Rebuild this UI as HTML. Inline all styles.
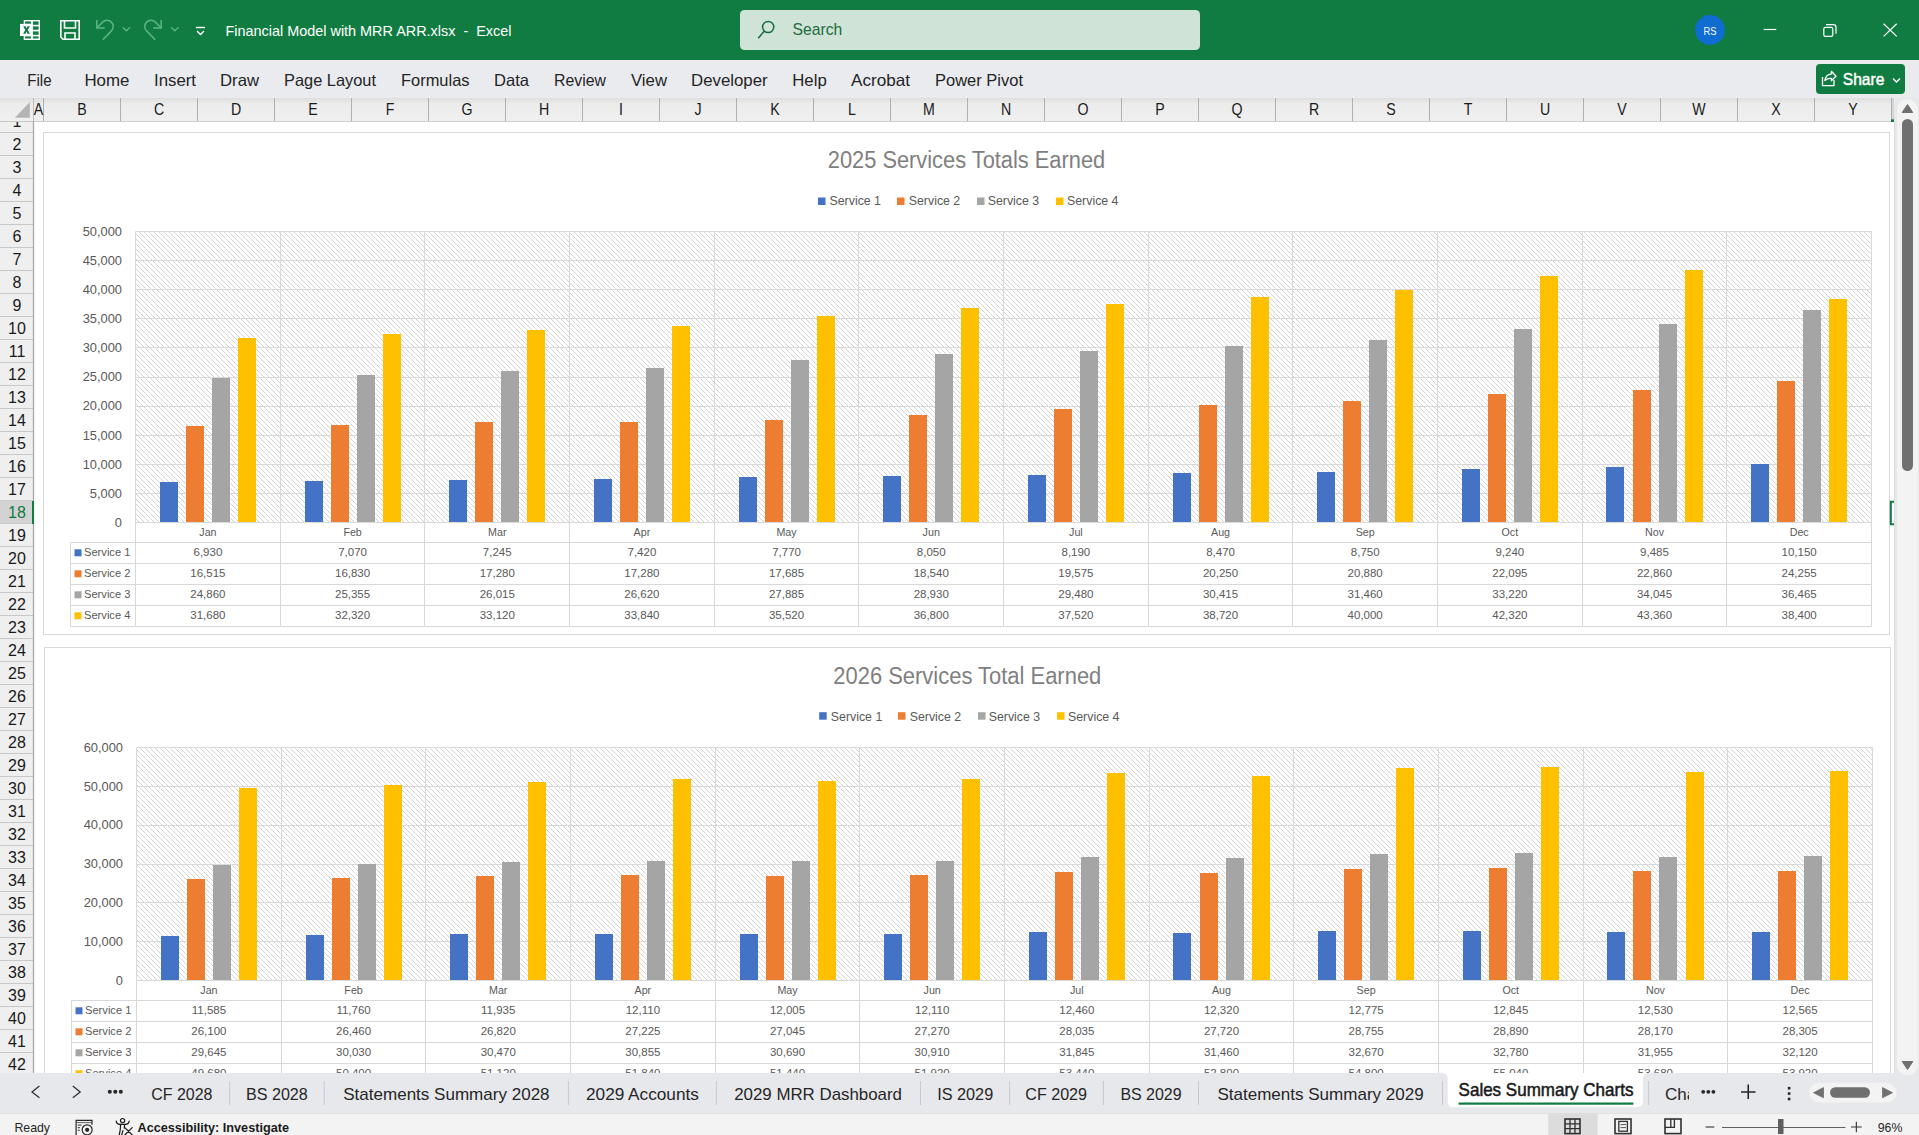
<!DOCTYPE html><html><head><meta charset="utf-8"><title>Excel</title><style>html,body{margin:0;padding:0;background:#fff;overflow:hidden}svg{display:block}text{font-family:"Liberation Sans",sans-serif}</style></head><body><svg width="1919" height="1135" viewBox="0 0 1919 1135" font-family="Liberation Sans, sans-serif">
<defs><pattern id="hatch" patternUnits="userSpaceOnUse" width="5" height="5"><rect x="2" y="0" width="1" height="1" fill="#d2d2d2"/><rect x="3" y="1" width="1" height="1" fill="#d2d2d2"/><rect x="4" y="2" width="1" height="1" fill="#d2d2d2"/><rect x="0" y="3" width="1" height="1" fill="#e0e0e0"/><rect x="1" y="4" width="1" height="1" fill="#d2d2d2"/></pattern></defs>
<rect x="0.00" y="0.00" width="1919.00" height="1135.00" fill="#ffffff"/>
<rect x="0.00" y="0.00" width="1919.00" height="60.00" fill="#117c42"/>
<g><rect x="23.7" y="20" width="16.3" height="20" fill="#ffffff"/><rect x="20" y="23.9" width="12" height="12.1" fill="#ffffff"/><g fill="#117c42"><rect x="25.1" y="21.4" width="5.8" height="2.3"/><rect x="25.1" y="36.4" width="5.8" height="2.1"/><rect x="32.9" y="21.4" width="5.7" height="3.4"/><rect x="32.9" y="26.4" width="5.7" height="3.3"/><rect x="32.9" y="31.4" width="5.7" height="3.4"/><rect x="32.9" y="36.4" width="5.7" height="2.1"/></g><path d="M23.2 26.2 H25.6 L26.5 28.4 L27.4 26.2 H29.8 L27.8 30 L29.9 33.8 H27.4 L26.5 31.6 L25.6 33.8 H23.1 L25.2 30 Z" fill="#117c42"/></g>
<g fill="none" stroke="#ffffff" stroke-width="1.6"><path d="M60.8 20.8 H79.2 V39.2 H63 L60.8 37 Z"/><path d="M64.5 20.8 V28 H75.5 V20.8"/><path d="M65 39.2 V33 H75 V39.2"/></g>
<g fill="none" stroke="#5db585" stroke-width="1.5"><path d="M96.8 20 V28 H104.8"/><path d="M96.8 28 L102.6 22.1 A6.2 6.2 0 1 1 111.4 30.9 L102.8 39.7"/><path d="M122.7 27.2 L126.4 30.8 L130.1 27.2" stroke-width="1.2"/><path d="M161.2 20 V28 H153.2"/><path d="M161.2 28 L155.4 22.1 A6.2 6.2 0 1 0 146.6 30.9 L155.2 39.7"/><path d="M171.2 27.2 L174.9 30.8 L178.6 27.2" stroke-width="1.2"/></g>
<g fill="none" stroke="#ffffff" stroke-width="1.4"><path d="M196 27.5 H205"/><path d="M197 31 L200.5 34.5 L204 31"/></g>
<text x="225.50" y="35.80" font-size="15" fill="#ffffff" textLength="286.00" lengthAdjust="spacingAndGlyphs" xml:space="preserve">Financial Model with MRR ARR.xlsx  -  Excel</text>
<rect x="740" y="10" width="460" height="40" rx="4.5" fill="#cfe3d6"/>
<g fill="none" stroke="#1c6b3e" stroke-width="1.5"><circle cx="768.2" cy="27" r="5.6"/><path d="M764.2 31.2 L758.2 38.2"/></g>
<text x="792.50" y="34.80" font-size="16.2" fill="#1c6b3e" textLength="49.70" lengthAdjust="spacingAndGlyphs" xml:space="preserve">Search</text>
<circle cx="1710" cy="30" r="15" fill="#0f6cd1"/>
<text x="1710.00" y="34.90" font-size="11.5" fill="#ffffff" text-anchor="middle" textLength="13.00" lengthAdjust="spacingAndGlyphs" xml:space="preserve">RS</text>
<line x1="1763.70" y1="29.50" x2="1776.30" y2="29.50" stroke="#ffffff" stroke-width="1.2"/>
<g fill="none" stroke="#ffffff" stroke-width="1.2"><rect x="1823.8" y="27.3" width="9" height="9" rx="1.6"/><path d="M1826 24.6 H1833.5 Q1836 24.6 1836 27 V33.8"/></g>
<g stroke="#ffffff" stroke-width="1.2"><path d="M1883.6 23.7 L1896.7 36.4 M1896.7 23.7 L1883.6 36.4"/></g>
<rect x="0.00" y="60.00" width="1919.00" height="38.00" fill="#e9ebef"/>
<text x="27.30" y="85.80" font-size="16.5" fill="#242424" textLength="24.30" lengthAdjust="spacingAndGlyphs" xml:space="preserve">File</text>
<text x="84.40" y="85.80" font-size="16.5" fill="#242424" textLength="45.00" lengthAdjust="spacingAndGlyphs" xml:space="preserve">Home</text>
<text x="154.00" y="85.80" font-size="16.5" fill="#242424" textLength="42.00" lengthAdjust="spacingAndGlyphs" xml:space="preserve">Insert</text>
<text x="220.00" y="85.80" font-size="16.5" fill="#242424" textLength="39.00" lengthAdjust="spacingAndGlyphs" xml:space="preserve">Draw</text>
<text x="284.00" y="85.80" font-size="16.5" fill="#242424" textLength="92.00" lengthAdjust="spacingAndGlyphs" xml:space="preserve">Page Layout</text>
<text x="401.00" y="85.80" font-size="16.5" fill="#242424" textLength="68.50" lengthAdjust="spacingAndGlyphs" xml:space="preserve">Formulas</text>
<text x="494.00" y="85.80" font-size="16.5" fill="#242424" textLength="35.00" lengthAdjust="spacingAndGlyphs" xml:space="preserve">Data</text>
<text x="554.00" y="85.80" font-size="16.5" fill="#242424" textLength="52.00" lengthAdjust="spacingAndGlyphs" xml:space="preserve">Review</text>
<text x="631.00" y="85.80" font-size="16.5" fill="#242424" textLength="36.00" lengthAdjust="spacingAndGlyphs" xml:space="preserve">View</text>
<text x="691.00" y="85.80" font-size="16.5" fill="#242424" textLength="76.70" lengthAdjust="spacingAndGlyphs" xml:space="preserve">Developer</text>
<text x="792.30" y="85.80" font-size="16.5" fill="#242424" textLength="34.40" lengthAdjust="spacingAndGlyphs" xml:space="preserve">Help</text>
<text x="851.00" y="85.80" font-size="16.5" fill="#242424" textLength="59.00" lengthAdjust="spacingAndGlyphs" xml:space="preserve">Acrobat</text>
<text x="935.00" y="85.80" font-size="16.5" fill="#242424" textLength="88.00" lengthAdjust="spacingAndGlyphs" xml:space="preserve">Power Pivot</text>
<rect x="1816" y="64" width="89" height="30" rx="4" fill="#117c42"/>
<g fill="none" stroke="#ffffff" stroke-width="1.3"><path d="M1822.5 77 V85.7 H1834 V80"/><path d="M1824.9 80.6 C1825.4 76.6 1827.6 74.3 1831.1 74.1 L1831.4 71.3 L1836 76.3 L1831.4 80.7 L1831.4 78.5 C1829 78.2 1827 78.6 1824.9 80.6 Z" stroke-linejoin="round"/><path d="M1893 78.5 L1896.5 82 L1900 78.5"/></g>
<text x="1842.80" y="85.00" font-size="16.5" fill="#ffffff" textLength="41.60" lengthAdjust="spacingAndGlyphs" stroke="#ffffff" stroke-width="0.45" xml:space="preserve">Share</text>
<defs><linearGradient id="chg" x1="0" y1="0" x2="0" y2="1"><stop offset="0" stop-color="#dedede"/><stop offset="0.25" stop-color="#ececec"/><stop offset="1" stop-color="#f0f0f0"/></linearGradient></defs>
<rect x="0.00" y="98.00" width="1919.00" height="23.50" fill="url(#chg)"/>
<path d="M29.9 117.7 L29.9 102.1 L14.8 117.7 Z" fill="#b4b4b4"/>
<line x1="33.50" y1="98.00" x2="33.50" y2="121.00" stroke="#bdbdbd" stroke-width="1"/>
<line x1="43.50" y1="98.00" x2="43.50" y2="121.00" stroke="#b0b0b0" stroke-width="1"/>
<text x="38.50" y="115.00" font-size="16.5" fill="#1a1a1a" text-anchor="middle" textLength="9.47" lengthAdjust="spacingAndGlyphs" xml:space="preserve">A</text>
<line x1="120.50" y1="98.00" x2="120.50" y2="121.00" stroke="#b0b0b0" stroke-width="1"/>
<text x="82.00" y="115.00" font-size="16.5" fill="#1a1a1a" text-anchor="middle" textLength="9.47" lengthAdjust="spacingAndGlyphs" xml:space="preserve">B</text>
<line x1="197.50" y1="98.00" x2="197.50" y2="121.00" stroke="#b0b0b0" stroke-width="1"/>
<text x="159.00" y="115.00" font-size="16.5" fill="#1a1a1a" text-anchor="middle" textLength="10.25" lengthAdjust="spacingAndGlyphs" xml:space="preserve">C</text>
<line x1="274.50" y1="98.00" x2="274.50" y2="121.00" stroke="#b0b0b0" stroke-width="1"/>
<text x="236.00" y="115.00" font-size="16.5" fill="#1a1a1a" text-anchor="middle" textLength="10.25" lengthAdjust="spacingAndGlyphs" xml:space="preserve">D</text>
<line x1="351.50" y1="98.00" x2="351.50" y2="121.00" stroke="#b0b0b0" stroke-width="1"/>
<text x="313.00" y="115.00" font-size="16.5" fill="#1a1a1a" text-anchor="middle" textLength="9.47" lengthAdjust="spacingAndGlyphs" xml:space="preserve">E</text>
<line x1="428.50" y1="98.00" x2="428.50" y2="121.00" stroke="#b0b0b0" stroke-width="1"/>
<text x="390.00" y="115.00" font-size="16.5" fill="#1a1a1a" text-anchor="middle" textLength="8.67" lengthAdjust="spacingAndGlyphs" xml:space="preserve">F</text>
<line x1="505.50" y1="98.00" x2="505.50" y2="121.00" stroke="#b0b0b0" stroke-width="1"/>
<text x="467.00" y="115.00" font-size="16.5" fill="#1a1a1a" text-anchor="middle" textLength="11.04" lengthAdjust="spacingAndGlyphs" xml:space="preserve">G</text>
<line x1="582.50" y1="98.00" x2="582.50" y2="121.00" stroke="#b0b0b0" stroke-width="1"/>
<text x="544.00" y="115.00" font-size="16.5" fill="#1a1a1a" text-anchor="middle" textLength="10.25" lengthAdjust="spacingAndGlyphs" xml:space="preserve">H</text>
<line x1="659.50" y1="98.00" x2="659.50" y2="121.00" stroke="#b0b0b0" stroke-width="1"/>
<text x="621.00" y="115.00" font-size="16.5" fill="#1a1a1a" text-anchor="middle" textLength="3.94" lengthAdjust="spacingAndGlyphs" xml:space="preserve">I</text>
<line x1="736.50" y1="98.00" x2="736.50" y2="121.00" stroke="#b0b0b0" stroke-width="1"/>
<text x="698.00" y="115.00" font-size="16.5" fill="#1a1a1a" text-anchor="middle" textLength="7.09" lengthAdjust="spacingAndGlyphs" xml:space="preserve">J</text>
<line x1="813.50" y1="98.00" x2="813.50" y2="121.00" stroke="#b0b0b0" stroke-width="1"/>
<text x="775.00" y="115.00" font-size="16.5" fill="#1a1a1a" text-anchor="middle" textLength="9.47" lengthAdjust="spacingAndGlyphs" xml:space="preserve">K</text>
<line x1="890.50" y1="98.00" x2="890.50" y2="121.00" stroke="#b0b0b0" stroke-width="1"/>
<text x="852.00" y="115.00" font-size="16.5" fill="#1a1a1a" text-anchor="middle" textLength="7.89" lengthAdjust="spacingAndGlyphs" xml:space="preserve">L</text>
<line x1="967.50" y1="98.00" x2="967.50" y2="121.00" stroke="#b0b0b0" stroke-width="1"/>
<text x="929.00" y="115.00" font-size="16.5" fill="#1a1a1a" text-anchor="middle" textLength="11.82" lengthAdjust="spacingAndGlyphs" xml:space="preserve">M</text>
<line x1="1044.50" y1="98.00" x2="1044.50" y2="121.00" stroke="#b0b0b0" stroke-width="1"/>
<text x="1006.00" y="115.00" font-size="16.5" fill="#1a1a1a" text-anchor="middle" textLength="10.25" lengthAdjust="spacingAndGlyphs" xml:space="preserve">N</text>
<line x1="1121.50" y1="98.00" x2="1121.50" y2="121.00" stroke="#b0b0b0" stroke-width="1"/>
<text x="1083.00" y="115.00" font-size="16.5" fill="#1a1a1a" text-anchor="middle" textLength="11.04" lengthAdjust="spacingAndGlyphs" xml:space="preserve">O</text>
<line x1="1198.50" y1="98.00" x2="1198.50" y2="121.00" stroke="#b0b0b0" stroke-width="1"/>
<text x="1160.00" y="115.00" font-size="16.5" fill="#1a1a1a" text-anchor="middle" textLength="9.47" lengthAdjust="spacingAndGlyphs" xml:space="preserve">P</text>
<line x1="1275.50" y1="98.00" x2="1275.50" y2="121.00" stroke="#b0b0b0" stroke-width="1"/>
<text x="1237.00" y="115.00" font-size="16.5" fill="#1a1a1a" text-anchor="middle" textLength="11.04" lengthAdjust="spacingAndGlyphs" xml:space="preserve">Q</text>
<line x1="1352.50" y1="98.00" x2="1352.50" y2="121.00" stroke="#b0b0b0" stroke-width="1"/>
<text x="1314.00" y="115.00" font-size="16.5" fill="#1a1a1a" text-anchor="middle" textLength="10.25" lengthAdjust="spacingAndGlyphs" xml:space="preserve">R</text>
<line x1="1429.50" y1="98.00" x2="1429.50" y2="121.00" stroke="#b0b0b0" stroke-width="1"/>
<text x="1391.00" y="115.00" font-size="16.5" fill="#1a1a1a" text-anchor="middle" textLength="9.47" lengthAdjust="spacingAndGlyphs" xml:space="preserve">S</text>
<line x1="1506.50" y1="98.00" x2="1506.50" y2="121.00" stroke="#b0b0b0" stroke-width="1"/>
<text x="1468.00" y="115.00" font-size="16.5" fill="#1a1a1a" text-anchor="middle" textLength="8.67" lengthAdjust="spacingAndGlyphs" xml:space="preserve">T</text>
<line x1="1583.50" y1="98.00" x2="1583.50" y2="121.00" stroke="#b0b0b0" stroke-width="1"/>
<text x="1545.00" y="115.00" font-size="16.5" fill="#1a1a1a" text-anchor="middle" textLength="10.25" lengthAdjust="spacingAndGlyphs" xml:space="preserve">U</text>
<line x1="1660.50" y1="98.00" x2="1660.50" y2="121.00" stroke="#b0b0b0" stroke-width="1"/>
<text x="1622.00" y="115.00" font-size="16.5" fill="#1a1a1a" text-anchor="middle" textLength="9.47" lengthAdjust="spacingAndGlyphs" xml:space="preserve">V</text>
<line x1="1737.50" y1="98.00" x2="1737.50" y2="121.00" stroke="#b0b0b0" stroke-width="1"/>
<text x="1699.00" y="115.00" font-size="16.5" fill="#1a1a1a" text-anchor="middle" textLength="13.39" lengthAdjust="spacingAndGlyphs" xml:space="preserve">W</text>
<line x1="1814.50" y1="98.00" x2="1814.50" y2="121.00" stroke="#b0b0b0" stroke-width="1"/>
<text x="1776.00" y="115.00" font-size="16.5" fill="#1a1a1a" text-anchor="middle" textLength="9.47" lengthAdjust="spacingAndGlyphs" xml:space="preserve">X</text>
<line x1="1891.50" y1="98.00" x2="1891.50" y2="121.00" stroke="#b0b0b0" stroke-width="1"/>
<text x="1853.00" y="115.00" font-size="16.5" fill="#1a1a1a" text-anchor="middle" textLength="9.47" lengthAdjust="spacingAndGlyphs" xml:space="preserve">Y</text>
<line x1="0.00" y1="121.50" x2="1891.50" y2="121.50" stroke="#9e9e9e" stroke-width="1"/>
<rect x="33.50" y="121.50" width="1861.00" height="951.50" fill="#ffffff"/>
<rect x="0.00" y="121.50" width="33.50" height="951.50" fill="#efefef"/>
<svg x="0" y="122" width="34" height="951" viewBox="0 122 34 951" overflow="hidden">
<line x1="0.00" y1="132.50" x2="33.00" y2="132.50" stroke="#c8c8c8" stroke-width="1"/>
<text x="17.00" y="126.70" font-size="16" fill="#1a1a1a" text-anchor="middle" xml:space="preserve">1</text>
<line x1="0.00" y1="155.50" x2="33.00" y2="155.50" stroke="#c8c8c8" stroke-width="1"/>
<text x="17.00" y="149.70" font-size="16" fill="#1a1a1a" text-anchor="middle" xml:space="preserve">2</text>
<line x1="0.00" y1="178.50" x2="33.00" y2="178.50" stroke="#c8c8c8" stroke-width="1"/>
<text x="17.00" y="172.70" font-size="16" fill="#1a1a1a" text-anchor="middle" xml:space="preserve">3</text>
<line x1="0.00" y1="201.50" x2="33.00" y2="201.50" stroke="#c8c8c8" stroke-width="1"/>
<text x="17.00" y="195.70" font-size="16" fill="#1a1a1a" text-anchor="middle" xml:space="preserve">4</text>
<line x1="0.00" y1="224.50" x2="33.00" y2="224.50" stroke="#c8c8c8" stroke-width="1"/>
<text x="17.00" y="218.70" font-size="16" fill="#1a1a1a" text-anchor="middle" xml:space="preserve">5</text>
<line x1="0.00" y1="247.50" x2="33.00" y2="247.50" stroke="#c8c8c8" stroke-width="1"/>
<text x="17.00" y="241.70" font-size="16" fill="#1a1a1a" text-anchor="middle" xml:space="preserve">6</text>
<line x1="0.00" y1="270.50" x2="33.00" y2="270.50" stroke="#c8c8c8" stroke-width="1"/>
<text x="17.00" y="264.70" font-size="16" fill="#1a1a1a" text-anchor="middle" xml:space="preserve">7</text>
<line x1="0.00" y1="293.50" x2="33.00" y2="293.50" stroke="#c8c8c8" stroke-width="1"/>
<text x="17.00" y="287.70" font-size="16" fill="#1a1a1a" text-anchor="middle" xml:space="preserve">8</text>
<line x1="0.00" y1="316.50" x2="33.00" y2="316.50" stroke="#c8c8c8" stroke-width="1"/>
<text x="17.00" y="310.70" font-size="16" fill="#1a1a1a" text-anchor="middle" xml:space="preserve">9</text>
<line x1="0.00" y1="339.50" x2="33.00" y2="339.50" stroke="#c8c8c8" stroke-width="1"/>
<text x="17.00" y="333.70" font-size="16" fill="#1a1a1a" text-anchor="middle" xml:space="preserve">10</text>
<line x1="0.00" y1="362.50" x2="33.00" y2="362.50" stroke="#c8c8c8" stroke-width="1"/>
<text x="17.00" y="356.70" font-size="16" fill="#1a1a1a" text-anchor="middle" xml:space="preserve">11</text>
<line x1="0.00" y1="385.50" x2="33.00" y2="385.50" stroke="#c8c8c8" stroke-width="1"/>
<text x="17.00" y="379.70" font-size="16" fill="#1a1a1a" text-anchor="middle" xml:space="preserve">12</text>
<line x1="0.00" y1="408.50" x2="33.00" y2="408.50" stroke="#c8c8c8" stroke-width="1"/>
<text x="17.00" y="402.70" font-size="16" fill="#1a1a1a" text-anchor="middle" xml:space="preserve">13</text>
<line x1="0.00" y1="431.50" x2="33.00" y2="431.50" stroke="#c8c8c8" stroke-width="1"/>
<text x="17.00" y="425.70" font-size="16" fill="#1a1a1a" text-anchor="middle" xml:space="preserve">14</text>
<line x1="0.00" y1="454.50" x2="33.00" y2="454.50" stroke="#c8c8c8" stroke-width="1"/>
<text x="17.00" y="448.70" font-size="16" fill="#1a1a1a" text-anchor="middle" xml:space="preserve">15</text>
<line x1="0.00" y1="477.50" x2="33.00" y2="477.50" stroke="#c8c8c8" stroke-width="1"/>
<text x="17.00" y="471.70" font-size="16" fill="#1a1a1a" text-anchor="middle" xml:space="preserve">16</text>
<line x1="0.00" y1="500.50" x2="33.00" y2="500.50" stroke="#c8c8c8" stroke-width="1"/>
<text x="17.00" y="494.70" font-size="16" fill="#1a1a1a" text-anchor="middle" xml:space="preserve">17</text>
<rect x="0.00" y="500.50" width="33.00" height="23.00" fill="#d3d3d3"/>
<line x1="0.00" y1="523.50" x2="33.00" y2="523.50" stroke="#c8c8c8" stroke-width="1"/>
<text x="17.00" y="517.70" font-size="16" fill="#107c41" text-anchor="middle" xml:space="preserve">18</text>
<line x1="0.00" y1="546.50" x2="33.00" y2="546.50" stroke="#c8c8c8" stroke-width="1"/>
<text x="17.00" y="540.70" font-size="16" fill="#1a1a1a" text-anchor="middle" xml:space="preserve">19</text>
<line x1="0.00" y1="569.50" x2="33.00" y2="569.50" stroke="#c8c8c8" stroke-width="1"/>
<text x="17.00" y="563.70" font-size="16" fill="#1a1a1a" text-anchor="middle" xml:space="preserve">20</text>
<line x1="0.00" y1="592.50" x2="33.00" y2="592.50" stroke="#c8c8c8" stroke-width="1"/>
<text x="17.00" y="586.70" font-size="16" fill="#1a1a1a" text-anchor="middle" xml:space="preserve">21</text>
<line x1="0.00" y1="615.50" x2="33.00" y2="615.50" stroke="#c8c8c8" stroke-width="1"/>
<text x="17.00" y="609.70" font-size="16" fill="#1a1a1a" text-anchor="middle" xml:space="preserve">22</text>
<line x1="0.00" y1="638.50" x2="33.00" y2="638.50" stroke="#c8c8c8" stroke-width="1"/>
<text x="17.00" y="632.70" font-size="16" fill="#1a1a1a" text-anchor="middle" xml:space="preserve">23</text>
<line x1="0.00" y1="661.50" x2="33.00" y2="661.50" stroke="#c8c8c8" stroke-width="1"/>
<text x="17.00" y="655.70" font-size="16" fill="#1a1a1a" text-anchor="middle" xml:space="preserve">24</text>
<line x1="0.00" y1="684.50" x2="33.00" y2="684.50" stroke="#c8c8c8" stroke-width="1"/>
<text x="17.00" y="678.70" font-size="16" fill="#1a1a1a" text-anchor="middle" xml:space="preserve">25</text>
<line x1="0.00" y1="707.50" x2="33.00" y2="707.50" stroke="#c8c8c8" stroke-width="1"/>
<text x="17.00" y="701.70" font-size="16" fill="#1a1a1a" text-anchor="middle" xml:space="preserve">26</text>
<line x1="0.00" y1="730.50" x2="33.00" y2="730.50" stroke="#c8c8c8" stroke-width="1"/>
<text x="17.00" y="724.70" font-size="16" fill="#1a1a1a" text-anchor="middle" xml:space="preserve">27</text>
<line x1="0.00" y1="753.50" x2="33.00" y2="753.50" stroke="#c8c8c8" stroke-width="1"/>
<text x="17.00" y="747.70" font-size="16" fill="#1a1a1a" text-anchor="middle" xml:space="preserve">28</text>
<line x1="0.00" y1="776.50" x2="33.00" y2="776.50" stroke="#c8c8c8" stroke-width="1"/>
<text x="17.00" y="770.70" font-size="16" fill="#1a1a1a" text-anchor="middle" xml:space="preserve">29</text>
<line x1="0.00" y1="799.50" x2="33.00" y2="799.50" stroke="#c8c8c8" stroke-width="1"/>
<text x="17.00" y="793.70" font-size="16" fill="#1a1a1a" text-anchor="middle" xml:space="preserve">30</text>
<line x1="0.00" y1="822.50" x2="33.00" y2="822.50" stroke="#c8c8c8" stroke-width="1"/>
<text x="17.00" y="816.70" font-size="16" fill="#1a1a1a" text-anchor="middle" xml:space="preserve">31</text>
<line x1="0.00" y1="845.50" x2="33.00" y2="845.50" stroke="#c8c8c8" stroke-width="1"/>
<text x="17.00" y="839.70" font-size="16" fill="#1a1a1a" text-anchor="middle" xml:space="preserve">32</text>
<line x1="0.00" y1="868.50" x2="33.00" y2="868.50" stroke="#c8c8c8" stroke-width="1"/>
<text x="17.00" y="862.70" font-size="16" fill="#1a1a1a" text-anchor="middle" xml:space="preserve">33</text>
<line x1="0.00" y1="891.50" x2="33.00" y2="891.50" stroke="#c8c8c8" stroke-width="1"/>
<text x="17.00" y="885.70" font-size="16" fill="#1a1a1a" text-anchor="middle" xml:space="preserve">34</text>
<line x1="0.00" y1="914.50" x2="33.00" y2="914.50" stroke="#c8c8c8" stroke-width="1"/>
<text x="17.00" y="908.70" font-size="16" fill="#1a1a1a" text-anchor="middle" xml:space="preserve">35</text>
<line x1="0.00" y1="937.50" x2="33.00" y2="937.50" stroke="#c8c8c8" stroke-width="1"/>
<text x="17.00" y="931.70" font-size="16" fill="#1a1a1a" text-anchor="middle" xml:space="preserve">36</text>
<line x1="0.00" y1="960.50" x2="33.00" y2="960.50" stroke="#c8c8c8" stroke-width="1"/>
<text x="17.00" y="954.70" font-size="16" fill="#1a1a1a" text-anchor="middle" xml:space="preserve">37</text>
<line x1="0.00" y1="983.50" x2="33.00" y2="983.50" stroke="#c8c8c8" stroke-width="1"/>
<text x="17.00" y="977.70" font-size="16" fill="#1a1a1a" text-anchor="middle" xml:space="preserve">38</text>
<line x1="0.00" y1="1006.50" x2="33.00" y2="1006.50" stroke="#c8c8c8" stroke-width="1"/>
<text x="17.00" y="1000.70" font-size="16" fill="#1a1a1a" text-anchor="middle" xml:space="preserve">39</text>
<line x1="0.00" y1="1029.50" x2="33.00" y2="1029.50" stroke="#c8c8c8" stroke-width="1"/>
<text x="17.00" y="1023.70" font-size="16" fill="#1a1a1a" text-anchor="middle" xml:space="preserve">40</text>
<line x1="0.00" y1="1052.50" x2="33.00" y2="1052.50" stroke="#c8c8c8" stroke-width="1"/>
<text x="17.00" y="1046.70" font-size="16" fill="#1a1a1a" text-anchor="middle" xml:space="preserve">41</text>
<line x1="0.00" y1="1075.50" x2="33.00" y2="1075.50" stroke="#c8c8c8" stroke-width="1"/>
<text x="17.00" y="1069.70" font-size="16" fill="#1a1a1a" text-anchor="middle" xml:space="preserve">42</text>
</svg>
<line x1="33.50" y1="121.00" x2="33.50" y2="1073.00" stroke="#a8a8a8" stroke-width="1.3"/>
<rect x="32.00" y="501.00" width="2.00" height="23.00" fill="#107c41"/>
<svg x="0" y="121.5" width="1894" height="951.5" viewBox="0 121.5 1894 951.5" overflow="hidden">
<rect x="43.50" y="132.50" width="1846.00" height="502.00" fill="#ffffff" stroke="#d9d9d9" stroke-width="1"/>
<text x="827.80" y="168.10" font-size="23" fill="#7f7f7f" textLength="277.40" lengthAdjust="spacingAndGlyphs" xml:space="preserve">2025 Services Totals Earned</text>
<rect x="818.00" y="197.50" width="7.50" height="7.50" fill="#4472c4"/>
<text x="829.50" y="204.50" font-size="12.3" fill="#595959" textLength="51.50" lengthAdjust="spacingAndGlyphs" xml:space="preserve">Service 1</text>
<rect x="897.00" y="197.50" width="7.50" height="7.50" fill="#ed7d31"/>
<text x="908.75" y="204.50" font-size="12.3" fill="#595959" textLength="51.50" lengthAdjust="spacingAndGlyphs" xml:space="preserve">Service 2</text>
<rect x="977.00" y="197.50" width="7.50" height="7.50" fill="#a5a5a5"/>
<text x="987.70" y="204.50" font-size="12.3" fill="#595959" textLength="51.50" lengthAdjust="spacingAndGlyphs" xml:space="preserve">Service 3</text>
<rect x="1056.00" y="197.50" width="7.50" height="7.50" fill="#ffc000"/>
<text x="1067.00" y="204.50" font-size="12.3" fill="#595959" textLength="51.50" lengthAdjust="spacingAndGlyphs" xml:space="preserve">Service 4</text>
<rect x="135.60" y="231.50" width="1735.90" height="291.00" fill="url(#hatch)"/>
<line x1="135.60" y1="231.50" x2="1871.50" y2="231.50" stroke="#d9d9d9" stroke-width="1"/>
<text x="122.00" y="235.80" font-size="12.2" fill="#595959" text-anchor="end" textLength="39.33" lengthAdjust="spacingAndGlyphs" xml:space="preserve">50,000</text>
<line x1="135.60" y1="260.50" x2="1871.50" y2="260.50" stroke="#d9d9d9" stroke-width="1"/>
<text x="122.00" y="264.90" font-size="12.2" fill="#595959" text-anchor="end" textLength="39.33" lengthAdjust="spacingAndGlyphs" xml:space="preserve">45,000</text>
<line x1="135.60" y1="289.50" x2="1871.50" y2="289.50" stroke="#d9d9d9" stroke-width="1"/>
<text x="122.00" y="294.00" font-size="12.2" fill="#595959" text-anchor="end" textLength="39.33" lengthAdjust="spacingAndGlyphs" xml:space="preserve">40,000</text>
<line x1="135.60" y1="318.50" x2="1871.50" y2="318.50" stroke="#d9d9d9" stroke-width="1"/>
<text x="122.00" y="323.10" font-size="12.2" fill="#595959" text-anchor="end" textLength="39.33" lengthAdjust="spacingAndGlyphs" xml:space="preserve">35,000</text>
<line x1="135.60" y1="347.50" x2="1871.50" y2="347.50" stroke="#d9d9d9" stroke-width="1"/>
<text x="122.00" y="352.20" font-size="12.2" fill="#595959" text-anchor="end" textLength="39.33" lengthAdjust="spacingAndGlyphs" xml:space="preserve">30,000</text>
<line x1="135.60" y1="377.50" x2="1871.50" y2="377.50" stroke="#d9d9d9" stroke-width="1"/>
<text x="122.00" y="381.30" font-size="12.2" fill="#595959" text-anchor="end" textLength="39.33" lengthAdjust="spacingAndGlyphs" xml:space="preserve">25,000</text>
<line x1="135.60" y1="406.50" x2="1871.50" y2="406.50" stroke="#d9d9d9" stroke-width="1"/>
<text x="122.00" y="410.40" font-size="12.2" fill="#595959" text-anchor="end" textLength="39.33" lengthAdjust="spacingAndGlyphs" xml:space="preserve">20,000</text>
<line x1="135.60" y1="435.50" x2="1871.50" y2="435.50" stroke="#d9d9d9" stroke-width="1"/>
<text x="122.00" y="439.50" font-size="12.2" fill="#595959" text-anchor="end" textLength="39.33" lengthAdjust="spacingAndGlyphs" xml:space="preserve">15,000</text>
<line x1="135.60" y1="464.50" x2="1871.50" y2="464.50" stroke="#d9d9d9" stroke-width="1"/>
<text x="122.00" y="468.60" font-size="12.2" fill="#595959" text-anchor="end" textLength="39.33" lengthAdjust="spacingAndGlyphs" xml:space="preserve">10,000</text>
<line x1="135.60" y1="493.50" x2="1871.50" y2="493.50" stroke="#d9d9d9" stroke-width="1"/>
<text x="122.00" y="497.70" font-size="12.2" fill="#595959" text-anchor="end" textLength="32.18" lengthAdjust="spacingAndGlyphs" xml:space="preserve">5,000</text>
<line x1="135.60" y1="522.50" x2="1871.50" y2="522.50" stroke="#d9d9d9" stroke-width="1"/>
<text x="122.00" y="526.80" font-size="12.2" fill="#595959" text-anchor="end" textLength="7.15" lengthAdjust="spacingAndGlyphs" xml:space="preserve">0</text>
<line x1="135.50" y1="231.50" x2="135.50" y2="626.50" stroke="#d9d9d9" stroke-width="1"/>
<line x1="280.50" y1="231.50" x2="280.50" y2="626.50" stroke="#d9d9d9" stroke-width="1"/>
<line x1="424.50" y1="231.50" x2="424.50" y2="626.50" stroke="#d9d9d9" stroke-width="1"/>
<line x1="569.50" y1="231.50" x2="569.50" y2="626.50" stroke="#d9d9d9" stroke-width="1"/>
<line x1="714.50" y1="231.50" x2="714.50" y2="626.50" stroke="#d9d9d9" stroke-width="1"/>
<line x1="858.50" y1="231.50" x2="858.50" y2="626.50" stroke="#d9d9d9" stroke-width="1"/>
<line x1="1003.50" y1="231.50" x2="1003.50" y2="626.50" stroke="#d9d9d9" stroke-width="1"/>
<line x1="1148.50" y1="231.50" x2="1148.50" y2="626.50" stroke="#d9d9d9" stroke-width="1"/>
<line x1="1292.50" y1="231.50" x2="1292.50" y2="626.50" stroke="#d9d9d9" stroke-width="1"/>
<line x1="1437.50" y1="231.50" x2="1437.50" y2="626.50" stroke="#d9d9d9" stroke-width="1"/>
<line x1="1582.50" y1="231.50" x2="1582.50" y2="626.50" stroke="#d9d9d9" stroke-width="1"/>
<line x1="1726.50" y1="231.50" x2="1726.50" y2="626.50" stroke="#d9d9d9" stroke-width="1"/>
<line x1="1871.50" y1="231.50" x2="1871.50" y2="626.50" stroke="#d9d9d9" stroke-width="1"/>
<rect x="160.00" y="482.00" width="18.00" height="40.00" fill="#4472c4"/>
<rect x="186.00" y="426.00" width="18.00" height="96.00" fill="#ed7d31"/>
<rect x="212.00" y="378.00" width="18.00" height="144.00" fill="#a5a5a5"/>
<rect x="238.00" y="338.00" width="18.00" height="184.00" fill="#ffc000"/>
<rect x="305.00" y="481.00" width="18.00" height="41.00" fill="#4472c4"/>
<rect x="331.00" y="425.00" width="18.00" height="97.00" fill="#ed7d31"/>
<rect x="357.00" y="375.00" width="18.00" height="147.00" fill="#a5a5a5"/>
<rect x="383.00" y="334.00" width="18.00" height="188.00" fill="#ffc000"/>
<rect x="449.00" y="480.00" width="18.00" height="42.00" fill="#4472c4"/>
<rect x="475.00" y="422.00" width="18.00" height="100.00" fill="#ed7d31"/>
<rect x="501.00" y="371.00" width="18.00" height="151.00" fill="#a5a5a5"/>
<rect x="527.00" y="330.00" width="18.00" height="192.00" fill="#ffc000"/>
<rect x="594.00" y="479.00" width="18.00" height="43.00" fill="#4472c4"/>
<rect x="620.00" y="422.00" width="18.00" height="100.00" fill="#ed7d31"/>
<rect x="646.00" y="368.00" width="18.00" height="154.00" fill="#a5a5a5"/>
<rect x="672.00" y="326.00" width="18.00" height="196.00" fill="#ffc000"/>
<rect x="739.00" y="477.00" width="18.00" height="45.00" fill="#4472c4"/>
<rect x="765.00" y="420.00" width="18.00" height="102.00" fill="#ed7d31"/>
<rect x="791.00" y="360.00" width="18.00" height="162.00" fill="#a5a5a5"/>
<rect x="817.00" y="316.00" width="18.00" height="206.00" fill="#ffc000"/>
<rect x="883.00" y="476.00" width="18.00" height="46.00" fill="#4472c4"/>
<rect x="909.00" y="415.00" width="18.00" height="107.00" fill="#ed7d31"/>
<rect x="935.00" y="354.00" width="18.00" height="168.00" fill="#a5a5a5"/>
<rect x="961.00" y="308.00" width="18.00" height="214.00" fill="#ffc000"/>
<rect x="1028.00" y="475.00" width="18.00" height="47.00" fill="#4472c4"/>
<rect x="1054.00" y="409.00" width="18.00" height="113.00" fill="#ed7d31"/>
<rect x="1080.00" y="351.00" width="18.00" height="171.00" fill="#a5a5a5"/>
<rect x="1106.00" y="304.00" width="18.00" height="218.00" fill="#ffc000"/>
<rect x="1173.00" y="473.00" width="18.00" height="49.00" fill="#4472c4"/>
<rect x="1199.00" y="405.00" width="18.00" height="117.00" fill="#ed7d31"/>
<rect x="1225.00" y="346.00" width="18.00" height="176.00" fill="#a5a5a5"/>
<rect x="1251.00" y="297.00" width="18.00" height="225.00" fill="#ffc000"/>
<rect x="1317.00" y="472.00" width="18.00" height="50.00" fill="#4472c4"/>
<rect x="1343.00" y="401.00" width="18.00" height="121.00" fill="#ed7d31"/>
<rect x="1369.00" y="340.00" width="18.00" height="182.00" fill="#a5a5a5"/>
<rect x="1395.00" y="290.00" width="18.00" height="232.00" fill="#ffc000"/>
<rect x="1462.00" y="469.00" width="18.00" height="53.00" fill="#4472c4"/>
<rect x="1488.00" y="394.00" width="18.00" height="128.00" fill="#ed7d31"/>
<rect x="1514.00" y="329.00" width="18.00" height="193.00" fill="#a5a5a5"/>
<rect x="1540.00" y="276.00" width="18.00" height="246.00" fill="#ffc000"/>
<rect x="1606.00" y="467.00" width="18.00" height="55.00" fill="#4472c4"/>
<rect x="1633.00" y="390.00" width="18.00" height="132.00" fill="#ed7d31"/>
<rect x="1659.00" y="324.00" width="18.00" height="198.00" fill="#a5a5a5"/>
<rect x="1685.00" y="270.00" width="18.00" height="252.00" fill="#ffc000"/>
<rect x="1751.00" y="464.00" width="18.00" height="58.00" fill="#4472c4"/>
<rect x="1777.00" y="381.00" width="18.00" height="141.00" fill="#ed7d31"/>
<rect x="1803.00" y="310.00" width="18.00" height="212.00" fill="#a5a5a5"/>
<rect x="1829.00" y="299.00" width="18.00" height="223.00" fill="#ffc000"/>
<line x1="70.50" y1="542.50" x2="1871.50" y2="542.50" stroke="#d9d9d9" stroke-width="1"/>
<line x1="70.50" y1="563.50" x2="1871.50" y2="563.50" stroke="#d9d9d9" stroke-width="1"/>
<line x1="70.50" y1="584.50" x2="1871.50" y2="584.50" stroke="#d9d9d9" stroke-width="1"/>
<line x1="70.50" y1="605.50" x2="1871.50" y2="605.50" stroke="#d9d9d9" stroke-width="1"/>
<line x1="70.50" y1="626.50" x2="1871.50" y2="626.50" stroke="#d9d9d9" stroke-width="1"/>
<line x1="70.50" y1="542.50" x2="70.50" y2="626.50" stroke="#d9d9d9" stroke-width="1"/>
<text x="207.93" y="536.00" font-size="11.5" fill="#595959" text-anchor="middle" textLength="17.24" lengthAdjust="spacingAndGlyphs" xml:space="preserve">Jan</text>
<text x="207.93" y="555.90" font-size="11.5" fill="#595959" text-anchor="middle" xml:space="preserve">6,930</text>
<text x="207.93" y="576.90" font-size="11.5" fill="#595959" text-anchor="middle" xml:space="preserve">16,515</text>
<text x="207.93" y="597.90" font-size="11.5" fill="#595959" text-anchor="middle" xml:space="preserve">24,860</text>
<text x="207.93" y="618.90" font-size="11.5" fill="#595959" text-anchor="middle" xml:space="preserve">31,680</text>
<text x="352.59" y="536.00" font-size="11.5" fill="#595959" text-anchor="middle" textLength="18.43" lengthAdjust="spacingAndGlyphs" xml:space="preserve">Feb</text>
<text x="352.59" y="555.90" font-size="11.5" fill="#595959" text-anchor="middle" xml:space="preserve">7,070</text>
<text x="352.59" y="576.90" font-size="11.5" fill="#595959" text-anchor="middle" xml:space="preserve">16,830</text>
<text x="352.59" y="597.90" font-size="11.5" fill="#595959" text-anchor="middle" xml:space="preserve">25,355</text>
<text x="352.59" y="618.90" font-size="11.5" fill="#595959" text-anchor="middle" xml:space="preserve">32,320</text>
<text x="497.25" y="536.00" font-size="11.5" fill="#595959" text-anchor="middle" textLength="18.42" lengthAdjust="spacingAndGlyphs" xml:space="preserve">Mar</text>
<text x="497.25" y="555.90" font-size="11.5" fill="#595959" text-anchor="middle" xml:space="preserve">7,245</text>
<text x="497.25" y="576.90" font-size="11.5" fill="#595959" text-anchor="middle" xml:space="preserve">17,280</text>
<text x="497.25" y="597.90" font-size="11.5" fill="#595959" text-anchor="middle" xml:space="preserve">26,015</text>
<text x="497.25" y="618.90" font-size="11.5" fill="#595959" text-anchor="middle" xml:space="preserve">33,120</text>
<text x="641.90" y="536.00" font-size="11.5" fill="#595959" text-anchor="middle" textLength="16.64" lengthAdjust="spacingAndGlyphs" xml:space="preserve">Apr</text>
<text x="641.90" y="555.90" font-size="11.5" fill="#595959" text-anchor="middle" xml:space="preserve">7,420</text>
<text x="641.90" y="576.90" font-size="11.5" fill="#595959" text-anchor="middle" xml:space="preserve">17,280</text>
<text x="641.90" y="597.90" font-size="11.5" fill="#595959" text-anchor="middle" xml:space="preserve">26,620</text>
<text x="641.90" y="618.90" font-size="11.5" fill="#595959" text-anchor="middle" xml:space="preserve">33,840</text>
<text x="786.56" y="536.00" font-size="11.5" fill="#595959" text-anchor="middle" textLength="20.20" lengthAdjust="spacingAndGlyphs" xml:space="preserve">May</text>
<text x="786.56" y="555.90" font-size="11.5" fill="#595959" text-anchor="middle" xml:space="preserve">7,770</text>
<text x="786.56" y="576.90" font-size="11.5" fill="#595959" text-anchor="middle" xml:space="preserve">17,685</text>
<text x="786.56" y="597.90" font-size="11.5" fill="#595959" text-anchor="middle" xml:space="preserve">27,885</text>
<text x="786.56" y="618.90" font-size="11.5" fill="#595959" text-anchor="middle" xml:space="preserve">35,520</text>
<text x="931.22" y="536.00" font-size="11.5" fill="#595959" text-anchor="middle" textLength="17.24" lengthAdjust="spacingAndGlyphs" xml:space="preserve">Jun</text>
<text x="931.22" y="555.90" font-size="11.5" fill="#595959" text-anchor="middle" xml:space="preserve">8,050</text>
<text x="931.22" y="576.90" font-size="11.5" fill="#595959" text-anchor="middle" xml:space="preserve">18,540</text>
<text x="931.22" y="597.90" font-size="11.5" fill="#595959" text-anchor="middle" xml:space="preserve">28,930</text>
<text x="931.22" y="618.90" font-size="11.5" fill="#595959" text-anchor="middle" xml:space="preserve">36,800</text>
<text x="1075.88" y="536.00" font-size="11.5" fill="#595959" text-anchor="middle" textLength="13.67" lengthAdjust="spacingAndGlyphs" xml:space="preserve">Jul</text>
<text x="1075.88" y="555.90" font-size="11.5" fill="#595959" text-anchor="middle" xml:space="preserve">8,190</text>
<text x="1075.88" y="576.90" font-size="11.5" fill="#595959" text-anchor="middle" xml:space="preserve">19,575</text>
<text x="1075.88" y="597.90" font-size="11.5" fill="#595959" text-anchor="middle" xml:space="preserve">29,480</text>
<text x="1075.88" y="618.90" font-size="11.5" fill="#595959" text-anchor="middle" xml:space="preserve">37,520</text>
<text x="1220.54" y="536.00" font-size="11.5" fill="#595959" text-anchor="middle" textLength="19.03" lengthAdjust="spacingAndGlyphs" xml:space="preserve">Aug</text>
<text x="1220.54" y="555.90" font-size="11.5" fill="#595959" text-anchor="middle" xml:space="preserve">8,470</text>
<text x="1220.54" y="576.90" font-size="11.5" fill="#595959" text-anchor="middle" xml:space="preserve">20,250</text>
<text x="1220.54" y="597.90" font-size="11.5" fill="#595959" text-anchor="middle" xml:space="preserve">30,415</text>
<text x="1220.54" y="618.90" font-size="11.5" fill="#595959" text-anchor="middle" xml:space="preserve">38,720</text>
<text x="1365.20" y="536.00" font-size="11.5" fill="#595959" text-anchor="middle" textLength="19.03" lengthAdjust="spacingAndGlyphs" xml:space="preserve">Sep</text>
<text x="1365.20" y="555.90" font-size="11.5" fill="#595959" text-anchor="middle" xml:space="preserve">8,750</text>
<text x="1365.20" y="576.90" font-size="11.5" fill="#595959" text-anchor="middle" xml:space="preserve">20,880</text>
<text x="1365.20" y="597.90" font-size="11.5" fill="#595959" text-anchor="middle" xml:space="preserve">31,460</text>
<text x="1365.20" y="618.90" font-size="11.5" fill="#595959" text-anchor="middle" xml:space="preserve">40,000</text>
<text x="1509.85" y="536.00" font-size="11.5" fill="#595959" text-anchor="middle" textLength="16.64" lengthAdjust="spacingAndGlyphs" xml:space="preserve">Oct</text>
<text x="1509.85" y="555.90" font-size="11.5" fill="#595959" text-anchor="middle" xml:space="preserve">9,240</text>
<text x="1509.85" y="576.90" font-size="11.5" fill="#595959" text-anchor="middle" xml:space="preserve">22,095</text>
<text x="1509.85" y="597.90" font-size="11.5" fill="#595959" text-anchor="middle" xml:space="preserve">33,220</text>
<text x="1509.85" y="618.90" font-size="11.5" fill="#595959" text-anchor="middle" xml:space="preserve">42,320</text>
<text x="1654.51" y="536.00" font-size="11.5" fill="#595959" text-anchor="middle" textLength="19.02" lengthAdjust="spacingAndGlyphs" xml:space="preserve">Nov</text>
<text x="1654.51" y="555.90" font-size="11.5" fill="#595959" text-anchor="middle" xml:space="preserve">9,485</text>
<text x="1654.51" y="576.90" font-size="11.5" fill="#595959" text-anchor="middle" xml:space="preserve">22,860</text>
<text x="1654.51" y="597.90" font-size="11.5" fill="#595959" text-anchor="middle" xml:space="preserve">34,045</text>
<text x="1654.51" y="618.90" font-size="11.5" fill="#595959" text-anchor="middle" xml:space="preserve">43,360</text>
<text x="1799.17" y="536.00" font-size="11.5" fill="#595959" text-anchor="middle" textLength="19.02" lengthAdjust="spacingAndGlyphs" xml:space="preserve">Dec</text>
<text x="1799.17" y="555.90" font-size="11.5" fill="#595959" text-anchor="middle" xml:space="preserve">10,150</text>
<text x="1799.17" y="576.90" font-size="11.5" fill="#595959" text-anchor="middle" xml:space="preserve">24,255</text>
<text x="1799.17" y="597.90" font-size="11.5" fill="#595959" text-anchor="middle" xml:space="preserve">36,465</text>
<text x="1799.17" y="618.90" font-size="11.5" fill="#595959" text-anchor="middle" xml:space="preserve">38,400</text>
<rect x="74.50" y="549.30" width="7.00" height="7.00" fill="#4472c4"/>
<text x="84.00" y="555.90" font-size="11.2" fill="#595959" textLength="46.40" lengthAdjust="spacingAndGlyphs" xml:space="preserve">Service 1</text>
<rect x="74.50" y="570.30" width="7.00" height="7.00" fill="#ed7d31"/>
<text x="84.00" y="576.90" font-size="11.2" fill="#595959" textLength="46.40" lengthAdjust="spacingAndGlyphs" xml:space="preserve">Service 2</text>
<rect x="74.50" y="591.30" width="7.00" height="7.00" fill="#a5a5a5"/>
<text x="84.00" y="597.90" font-size="11.2" fill="#595959" textLength="46.40" lengthAdjust="spacingAndGlyphs" xml:space="preserve">Service 3</text>
<rect x="74.50" y="612.30" width="7.00" height="7.00" fill="#ffc000"/>
<text x="84.00" y="618.90" font-size="11.2" fill="#595959" textLength="46.40" lengthAdjust="spacingAndGlyphs" xml:space="preserve">Service 4</text>
<rect x="44.50" y="647.50" width="1846.00" height="552.50" fill="#ffffff" stroke="#d9d9d9" stroke-width="1"/>
<text x="833.30" y="684.20" font-size="23" fill="#7f7f7f" textLength="268.00" lengthAdjust="spacingAndGlyphs" xml:space="preserve">2026 Services Total Earned</text>
<rect x="819.20" y="712.20" width="7.50" height="7.50" fill="#4472c4"/>
<text x="830.80" y="720.80" font-size="12.3" fill="#595959" textLength="51.50" lengthAdjust="spacingAndGlyphs" xml:space="preserve">Service 1</text>
<rect x="898.00" y="712.20" width="7.50" height="7.50" fill="#ed7d31"/>
<text x="909.70" y="720.80" font-size="12.3" fill="#595959" textLength="51.50" lengthAdjust="spacingAndGlyphs" xml:space="preserve">Service 2</text>
<rect x="978.00" y="712.20" width="7.50" height="7.50" fill="#a5a5a5"/>
<text x="988.70" y="720.80" font-size="12.3" fill="#595959" textLength="51.50" lengthAdjust="spacingAndGlyphs" xml:space="preserve">Service 3</text>
<rect x="1057.00" y="712.20" width="7.50" height="7.50" fill="#ffc000"/>
<text x="1068.00" y="720.80" font-size="12.3" fill="#595959" textLength="51.50" lengthAdjust="spacingAndGlyphs" xml:space="preserve">Service 4</text>
<rect x="136.60" y="747.50" width="1735.80" height="233.00" fill="url(#hatch)"/>
<line x1="136.60" y1="747.50" x2="1872.40" y2="747.50" stroke="#d9d9d9" stroke-width="1"/>
<text x="123.00" y="751.80" font-size="12.2" fill="#595959" text-anchor="end" textLength="39.33" lengthAdjust="spacingAndGlyphs" xml:space="preserve">60,000</text>
<line x1="136.60" y1="786.50" x2="1872.40" y2="786.50" stroke="#d9d9d9" stroke-width="1"/>
<text x="123.00" y="790.63" font-size="12.2" fill="#595959" text-anchor="end" textLength="39.33" lengthAdjust="spacingAndGlyphs" xml:space="preserve">50,000</text>
<line x1="136.60" y1="825.50" x2="1872.40" y2="825.50" stroke="#d9d9d9" stroke-width="1"/>
<text x="123.00" y="829.47" font-size="12.2" fill="#595959" text-anchor="end" textLength="39.33" lengthAdjust="spacingAndGlyphs" xml:space="preserve">40,000</text>
<line x1="136.60" y1="864.50" x2="1872.40" y2="864.50" stroke="#d9d9d9" stroke-width="1"/>
<text x="123.00" y="868.30" font-size="12.2" fill="#595959" text-anchor="end" textLength="39.33" lengthAdjust="spacingAndGlyphs" xml:space="preserve">30,000</text>
<line x1="136.60" y1="902.50" x2="1872.40" y2="902.50" stroke="#d9d9d9" stroke-width="1"/>
<text x="123.00" y="907.13" font-size="12.2" fill="#595959" text-anchor="end" textLength="39.33" lengthAdjust="spacingAndGlyphs" xml:space="preserve">20,000</text>
<line x1="136.60" y1="941.50" x2="1872.40" y2="941.50" stroke="#d9d9d9" stroke-width="1"/>
<text x="123.00" y="945.97" font-size="12.2" fill="#595959" text-anchor="end" textLength="39.33" lengthAdjust="spacingAndGlyphs" xml:space="preserve">10,000</text>
<line x1="136.60" y1="980.50" x2="1872.40" y2="980.50" stroke="#d9d9d9" stroke-width="1"/>
<text x="123.00" y="984.80" font-size="12.2" fill="#595959" text-anchor="end" textLength="7.15" lengthAdjust="spacingAndGlyphs" xml:space="preserve">0</text>
<line x1="136.50" y1="747.50" x2="136.50" y2="1084.50" stroke="#d9d9d9" stroke-width="1"/>
<line x1="281.50" y1="747.50" x2="281.50" y2="1084.50" stroke="#d9d9d9" stroke-width="1"/>
<line x1="425.50" y1="747.50" x2="425.50" y2="1084.50" stroke="#d9d9d9" stroke-width="1"/>
<line x1="570.50" y1="747.50" x2="570.50" y2="1084.50" stroke="#d9d9d9" stroke-width="1"/>
<line x1="715.50" y1="747.50" x2="715.50" y2="1084.50" stroke="#d9d9d9" stroke-width="1"/>
<line x1="859.50" y1="747.50" x2="859.50" y2="1084.50" stroke="#d9d9d9" stroke-width="1"/>
<line x1="1004.50" y1="747.50" x2="1004.50" y2="1084.50" stroke="#d9d9d9" stroke-width="1"/>
<line x1="1149.50" y1="747.50" x2="1149.50" y2="1084.50" stroke="#d9d9d9" stroke-width="1"/>
<line x1="1293.50" y1="747.50" x2="1293.50" y2="1084.50" stroke="#d9d9d9" stroke-width="1"/>
<line x1="1438.50" y1="747.50" x2="1438.50" y2="1084.50" stroke="#d9d9d9" stroke-width="1"/>
<line x1="1583.50" y1="747.50" x2="1583.50" y2="1084.50" stroke="#d9d9d9" stroke-width="1"/>
<line x1="1727.50" y1="747.50" x2="1727.50" y2="1084.50" stroke="#d9d9d9" stroke-width="1"/>
<line x1="1872.50" y1="747.50" x2="1872.50" y2="1084.50" stroke="#d9d9d9" stroke-width="1"/>
<rect x="161.00" y="936.00" width="18.00" height="44.00" fill="#4472c4"/>
<rect x="187.00" y="879.00" width="18.00" height="101.00" fill="#ed7d31"/>
<rect x="213.00" y="865.00" width="18.00" height="115.00" fill="#a5a5a5"/>
<rect x="239.00" y="788.00" width="18.00" height="192.00" fill="#ffc000"/>
<rect x="306.00" y="935.00" width="18.00" height="45.00" fill="#4472c4"/>
<rect x="332.00" y="878.00" width="18.00" height="102.00" fill="#ed7d31"/>
<rect x="358.00" y="864.00" width="18.00" height="116.00" fill="#a5a5a5"/>
<rect x="384.00" y="785.00" width="18.00" height="195.00" fill="#ffc000"/>
<rect x="450.00" y="934.00" width="18.00" height="46.00" fill="#4472c4"/>
<rect x="476.00" y="876.00" width="18.00" height="104.00" fill="#ed7d31"/>
<rect x="502.00" y="862.00" width="18.00" height="118.00" fill="#a5a5a5"/>
<rect x="528.00" y="782.00" width="18.00" height="198.00" fill="#ffc000"/>
<rect x="595.00" y="934.00" width="18.00" height="46.00" fill="#4472c4"/>
<rect x="621.00" y="875.00" width="18.00" height="105.00" fill="#ed7d31"/>
<rect x="647.00" y="861.00" width="18.00" height="119.00" fill="#a5a5a5"/>
<rect x="673.00" y="779.00" width="18.00" height="201.00" fill="#ffc000"/>
<rect x="740.00" y="934.00" width="18.00" height="46.00" fill="#4472c4"/>
<rect x="766.00" y="876.00" width="18.00" height="104.00" fill="#ed7d31"/>
<rect x="792.00" y="861.00" width="18.00" height="119.00" fill="#a5a5a5"/>
<rect x="818.00" y="781.00" width="18.00" height="199.00" fill="#ffc000"/>
<rect x="884.00" y="934.00" width="18.00" height="46.00" fill="#4472c4"/>
<rect x="910.00" y="875.00" width="18.00" height="105.00" fill="#ed7d31"/>
<rect x="936.00" y="861.00" width="18.00" height="119.00" fill="#a5a5a5"/>
<rect x="962.00" y="779.00" width="18.00" height="201.00" fill="#ffc000"/>
<rect x="1029.00" y="932.00" width="18.00" height="48.00" fill="#4472c4"/>
<rect x="1055.00" y="872.00" width="18.00" height="108.00" fill="#ed7d31"/>
<rect x="1081.00" y="857.00" width="18.00" height="123.00" fill="#a5a5a5"/>
<rect x="1107.00" y="773.00" width="18.00" height="207.00" fill="#ffc000"/>
<rect x="1173.00" y="933.00" width="18.00" height="47.00" fill="#4472c4"/>
<rect x="1200.00" y="873.00" width="18.00" height="107.00" fill="#ed7d31"/>
<rect x="1226.00" y="858.00" width="18.00" height="122.00" fill="#a5a5a5"/>
<rect x="1252.00" y="776.00" width="18.00" height="204.00" fill="#ffc000"/>
<rect x="1318.00" y="931.00" width="18.00" height="49.00" fill="#4472c4"/>
<rect x="1344.00" y="869.00" width="18.00" height="111.00" fill="#ed7d31"/>
<rect x="1370.00" y="854.00" width="18.00" height="126.00" fill="#a5a5a5"/>
<rect x="1396.00" y="768.00" width="18.00" height="212.00" fill="#ffc000"/>
<rect x="1463.00" y="931.00" width="18.00" height="49.00" fill="#4472c4"/>
<rect x="1489.00" y="868.00" width="18.00" height="112.00" fill="#ed7d31"/>
<rect x="1515.00" y="853.00" width="18.00" height="127.00" fill="#a5a5a5"/>
<rect x="1541.00" y="767.00" width="18.00" height="213.00" fill="#ffc000"/>
<rect x="1607.00" y="932.00" width="18.00" height="48.00" fill="#4472c4"/>
<rect x="1633.00" y="871.00" width="18.00" height="109.00" fill="#ed7d31"/>
<rect x="1659.00" y="857.00" width="18.00" height="123.00" fill="#a5a5a5"/>
<rect x="1686.00" y="772.00" width="18.00" height="208.00" fill="#ffc000"/>
<rect x="1752.00" y="932.00" width="18.00" height="48.00" fill="#4472c4"/>
<rect x="1778.00" y="871.00" width="18.00" height="109.00" fill="#ed7d31"/>
<rect x="1804.00" y="856.00" width="18.00" height="124.00" fill="#a5a5a5"/>
<rect x="1830.00" y="771.00" width="18.00" height="209.00" fill="#ffc000"/>
<line x1="71.50" y1="1000.50" x2="1872.40" y2="1000.50" stroke="#d9d9d9" stroke-width="1"/>
<line x1="71.50" y1="1021.50" x2="1872.40" y2="1021.50" stroke="#d9d9d9" stroke-width="1"/>
<line x1="71.50" y1="1042.50" x2="1872.40" y2="1042.50" stroke="#d9d9d9" stroke-width="1"/>
<line x1="71.50" y1="1063.50" x2="1872.40" y2="1063.50" stroke="#d9d9d9" stroke-width="1"/>
<line x1="71.50" y1="1084.50" x2="1872.40" y2="1084.50" stroke="#d9d9d9" stroke-width="1"/>
<line x1="71.50" y1="1000.50" x2="71.50" y2="1084.50" stroke="#d9d9d9" stroke-width="1"/>
<text x="208.93" y="994.00" font-size="11.5" fill="#595959" text-anchor="middle" textLength="17.24" lengthAdjust="spacingAndGlyphs" xml:space="preserve">Jan</text>
<text x="208.93" y="1013.90" font-size="11.5" fill="#595959" text-anchor="middle" xml:space="preserve">11,585</text>
<text x="208.93" y="1034.90" font-size="11.5" fill="#595959" text-anchor="middle" xml:space="preserve">26,100</text>
<text x="208.93" y="1055.90" font-size="11.5" fill="#595959" text-anchor="middle" xml:space="preserve">29,645</text>
<text x="208.93" y="1076.90" font-size="11.5" fill="#595959" text-anchor="middle" xml:space="preserve">49,680</text>
<text x="353.58" y="994.00" font-size="11.5" fill="#595959" text-anchor="middle" textLength="18.43" lengthAdjust="spacingAndGlyphs" xml:space="preserve">Feb</text>
<text x="353.58" y="1013.90" font-size="11.5" fill="#595959" text-anchor="middle" xml:space="preserve">11,760</text>
<text x="353.58" y="1034.90" font-size="11.5" fill="#595959" text-anchor="middle" xml:space="preserve">26,460</text>
<text x="353.58" y="1055.90" font-size="11.5" fill="#595959" text-anchor="middle" xml:space="preserve">30,030</text>
<text x="353.58" y="1076.90" font-size="11.5" fill="#595959" text-anchor="middle" xml:space="preserve">50,400</text>
<text x="498.23" y="994.00" font-size="11.5" fill="#595959" text-anchor="middle" textLength="18.42" lengthAdjust="spacingAndGlyphs" xml:space="preserve">Mar</text>
<text x="498.23" y="1013.90" font-size="11.5" fill="#595959" text-anchor="middle" xml:space="preserve">11,935</text>
<text x="498.23" y="1034.90" font-size="11.5" fill="#595959" text-anchor="middle" xml:space="preserve">26,820</text>
<text x="498.23" y="1055.90" font-size="11.5" fill="#595959" text-anchor="middle" xml:space="preserve">30,470</text>
<text x="498.23" y="1076.90" font-size="11.5" fill="#595959" text-anchor="middle" xml:space="preserve">51,120</text>
<text x="642.88" y="994.00" font-size="11.5" fill="#595959" text-anchor="middle" textLength="16.64" lengthAdjust="spacingAndGlyphs" xml:space="preserve">Apr</text>
<text x="642.88" y="1013.90" font-size="11.5" fill="#595959" text-anchor="middle" xml:space="preserve">12,110</text>
<text x="642.88" y="1034.90" font-size="11.5" fill="#595959" text-anchor="middle" xml:space="preserve">27,225</text>
<text x="642.88" y="1055.90" font-size="11.5" fill="#595959" text-anchor="middle" xml:space="preserve">30,855</text>
<text x="642.88" y="1076.90" font-size="11.5" fill="#595959" text-anchor="middle" xml:space="preserve">51,840</text>
<text x="787.53" y="994.00" font-size="11.5" fill="#595959" text-anchor="middle" textLength="20.20" lengthAdjust="spacingAndGlyphs" xml:space="preserve">May</text>
<text x="787.53" y="1013.90" font-size="11.5" fill="#595959" text-anchor="middle" xml:space="preserve">12,005</text>
<text x="787.53" y="1034.90" font-size="11.5" fill="#595959" text-anchor="middle" xml:space="preserve">27,045</text>
<text x="787.53" y="1055.90" font-size="11.5" fill="#595959" text-anchor="middle" xml:space="preserve">30,690</text>
<text x="787.53" y="1076.90" font-size="11.5" fill="#595959" text-anchor="middle" xml:space="preserve">51,440</text>
<text x="932.18" y="994.00" font-size="11.5" fill="#595959" text-anchor="middle" textLength="17.24" lengthAdjust="spacingAndGlyphs" xml:space="preserve">Jun</text>
<text x="932.18" y="1013.90" font-size="11.5" fill="#595959" text-anchor="middle" xml:space="preserve">12,110</text>
<text x="932.18" y="1034.90" font-size="11.5" fill="#595959" text-anchor="middle" xml:space="preserve">27,270</text>
<text x="932.18" y="1055.90" font-size="11.5" fill="#595959" text-anchor="middle" xml:space="preserve">30,910</text>
<text x="932.18" y="1076.90" font-size="11.5" fill="#595959" text-anchor="middle" xml:space="preserve">51,920</text>
<text x="1076.83" y="994.00" font-size="11.5" fill="#595959" text-anchor="middle" textLength="13.67" lengthAdjust="spacingAndGlyphs" xml:space="preserve">Jul</text>
<text x="1076.83" y="1013.90" font-size="11.5" fill="#595959" text-anchor="middle" xml:space="preserve">12,460</text>
<text x="1076.83" y="1034.90" font-size="11.5" fill="#595959" text-anchor="middle" xml:space="preserve">28,035</text>
<text x="1076.83" y="1055.90" font-size="11.5" fill="#595959" text-anchor="middle" xml:space="preserve">31,845</text>
<text x="1076.83" y="1076.90" font-size="11.5" fill="#595959" text-anchor="middle" xml:space="preserve">53,440</text>
<text x="1221.47" y="994.00" font-size="11.5" fill="#595959" text-anchor="middle" textLength="19.03" lengthAdjust="spacingAndGlyphs" xml:space="preserve">Aug</text>
<text x="1221.47" y="1013.90" font-size="11.5" fill="#595959" text-anchor="middle" xml:space="preserve">12,320</text>
<text x="1221.47" y="1034.90" font-size="11.5" fill="#595959" text-anchor="middle" xml:space="preserve">27,720</text>
<text x="1221.47" y="1055.90" font-size="11.5" fill="#595959" text-anchor="middle" xml:space="preserve">31,460</text>
<text x="1221.47" y="1076.90" font-size="11.5" fill="#595959" text-anchor="middle" xml:space="preserve">52,800</text>
<text x="1366.12" y="994.00" font-size="11.5" fill="#595959" text-anchor="middle" textLength="19.03" lengthAdjust="spacingAndGlyphs" xml:space="preserve">Sep</text>
<text x="1366.12" y="1013.90" font-size="11.5" fill="#595959" text-anchor="middle" xml:space="preserve">12,775</text>
<text x="1366.12" y="1034.90" font-size="11.5" fill="#595959" text-anchor="middle" xml:space="preserve">28,755</text>
<text x="1366.12" y="1055.90" font-size="11.5" fill="#595959" text-anchor="middle" xml:space="preserve">32,670</text>
<text x="1366.12" y="1076.90" font-size="11.5" fill="#595959" text-anchor="middle" xml:space="preserve">54,800</text>
<text x="1510.77" y="994.00" font-size="11.5" fill="#595959" text-anchor="middle" textLength="16.64" lengthAdjust="spacingAndGlyphs" xml:space="preserve">Oct</text>
<text x="1510.77" y="1013.90" font-size="11.5" fill="#595959" text-anchor="middle" xml:space="preserve">12,845</text>
<text x="1510.77" y="1034.90" font-size="11.5" fill="#595959" text-anchor="middle" xml:space="preserve">28,890</text>
<text x="1510.77" y="1055.90" font-size="11.5" fill="#595959" text-anchor="middle" xml:space="preserve">32,780</text>
<text x="1510.77" y="1076.90" font-size="11.5" fill="#595959" text-anchor="middle" xml:space="preserve">55,040</text>
<text x="1655.42" y="994.00" font-size="11.5" fill="#595959" text-anchor="middle" textLength="19.02" lengthAdjust="spacingAndGlyphs" xml:space="preserve">Nov</text>
<text x="1655.42" y="1013.90" font-size="11.5" fill="#595959" text-anchor="middle" xml:space="preserve">12,530</text>
<text x="1655.42" y="1034.90" font-size="11.5" fill="#595959" text-anchor="middle" xml:space="preserve">28,170</text>
<text x="1655.42" y="1055.90" font-size="11.5" fill="#595959" text-anchor="middle" xml:space="preserve">31,955</text>
<text x="1655.42" y="1076.90" font-size="11.5" fill="#595959" text-anchor="middle" xml:space="preserve">53,680</text>
<text x="1800.08" y="994.00" font-size="11.5" fill="#595959" text-anchor="middle" textLength="19.02" lengthAdjust="spacingAndGlyphs" xml:space="preserve">Dec</text>
<text x="1800.08" y="1013.90" font-size="11.5" fill="#595959" text-anchor="middle" xml:space="preserve">12,565</text>
<text x="1800.08" y="1034.90" font-size="11.5" fill="#595959" text-anchor="middle" xml:space="preserve">28,305</text>
<text x="1800.08" y="1055.90" font-size="11.5" fill="#595959" text-anchor="middle" xml:space="preserve">32,120</text>
<text x="1800.08" y="1076.90" font-size="11.5" fill="#595959" text-anchor="middle" xml:space="preserve">53,920</text>
<rect x="75.50" y="1007.30" width="7.00" height="7.00" fill="#4472c4"/>
<text x="85.00" y="1013.90" font-size="11.2" fill="#595959" textLength="46.40" lengthAdjust="spacingAndGlyphs" xml:space="preserve">Service 1</text>
<rect x="75.50" y="1028.30" width="7.00" height="7.00" fill="#ed7d31"/>
<text x="85.00" y="1034.90" font-size="11.2" fill="#595959" textLength="46.40" lengthAdjust="spacingAndGlyphs" xml:space="preserve">Service 2</text>
<rect x="75.50" y="1049.30" width="7.00" height="7.00" fill="#a5a5a5"/>
<text x="85.00" y="1055.90" font-size="11.2" fill="#595959" textLength="46.40" lengthAdjust="spacingAndGlyphs" xml:space="preserve">Service 3</text>
<rect x="75.50" y="1070.30" width="7.00" height="7.00" fill="#ffc000"/>
<text x="85.00" y="1076.90" font-size="11.2" fill="#595959" textLength="46.40" lengthAdjust="spacingAndGlyphs" xml:space="preserve">Service 4</text>
</svg>
<path d="M1894 501.8 H1890.8 V524.2 H1894" fill="none" stroke="#107c41" stroke-width="2"/>
<rect x="1892.00" y="98.50" width="2.50" height="22.50" fill="#d4d4d4"/>
<rect x="1891.00" y="119.30" width="3.00" height="2.70" fill="#107c41"/>
<rect x="0.00" y="1073.00" width="1919.00" height="40.00" fill="#e6e8ec"/>
<rect x="1894.00" y="98.00" width="25.00" height="975.00" fill="#e6e8ec"/>
<line x1="1894.50" y1="121.00" x2="1894.50" y2="1073.00" stroke="#dcdcdc" stroke-width="1"/>
<rect x="1897" y="99" width="21" height="976.6" rx="10.5" fill="#f3f3f3"/>
<path d="M1907.5 104.5 L1912.8 112.5 L1902.2 112.5 Z" fill="#707070" stroke="#707070" stroke-width="1" stroke-linejoin="round"/>
<rect x="1902" y="119" width="11" height="352" rx="5.5" fill="#707070"/>
<path d="M1907.5 1069.5 L1912.8 1061.5 L1902.2 1061.5 Z" fill="#707070" stroke="#707070" stroke-width="1" stroke-linejoin="round"/>
<line x1="0.00" y1="1113.50" x2="1919.00" y2="1113.50" stroke="#cfcfcf" stroke-width="1"/>
<g fill="none" stroke="#333333" stroke-width="1.3"><path d="M39.4 1086 L32 1091.9 L39.4 1097.8"/><path d="M72.8 1086 L80.2 1091.9 L72.8 1097.8"/></g>
<circle cx="109.8" cy="1091.8" r="2" fill="#262626"/>
<circle cx="115.3" cy="1091.8" r="2" fill="#262626"/>
<circle cx="120.8" cy="1091.8" r="2" fill="#262626"/>
<text x="151.25" y="1099.80" font-size="17" fill="#262626" textLength="61.25" lengthAdjust="spacingAndGlyphs" xml:space="preserve">CF 2028</text>
<text x="246.00" y="1099.80" font-size="17" fill="#262626" textLength="61.80" lengthAdjust="spacingAndGlyphs" xml:space="preserve">BS 2028</text>
<text x="343.20" y="1099.80" font-size="17" fill="#262626" textLength="206.40" lengthAdjust="spacingAndGlyphs" xml:space="preserve">Statements Summary 2028</text>
<text x="586.00" y="1099.80" font-size="17" fill="#262626" textLength="112.90" lengthAdjust="spacingAndGlyphs" xml:space="preserve">2029 Accounts</text>
<text x="734.20" y="1099.80" font-size="17" fill="#262626" textLength="167.80" lengthAdjust="spacingAndGlyphs" xml:space="preserve">2029 MRR Dashboard</text>
<text x="937.20" y="1099.80" font-size="17" fill="#262626" textLength="56.00" lengthAdjust="spacingAndGlyphs" xml:space="preserve">IS 2029</text>
<text x="1025.30" y="1099.80" font-size="17" fill="#262626" textLength="61.70" lengthAdjust="spacingAndGlyphs" xml:space="preserve">CF 2029</text>
<text x="1120.40" y="1099.80" font-size="17" fill="#262626" textLength="61.20" lengthAdjust="spacingAndGlyphs" xml:space="preserve">BS 2029</text>
<text x="1217.40" y="1099.80" font-size="17" fill="#262626" textLength="206.30" lengthAdjust="spacingAndGlyphs" xml:space="preserve">Statements Summary 2029</text>
<line x1="229.60" y1="1081.00" x2="229.60" y2="1105.00" stroke="#c8c8c8" stroke-width="1"/>
<line x1="324.20" y1="1081.00" x2="324.20" y2="1105.00" stroke="#c8c8c8" stroke-width="1"/>
<line x1="568.40" y1="1081.00" x2="568.40" y2="1105.00" stroke="#c8c8c8" stroke-width="1"/>
<line x1="716.30" y1="1081.00" x2="716.30" y2="1105.00" stroke="#c8c8c8" stroke-width="1"/>
<line x1="920.50" y1="1081.00" x2="920.50" y2="1105.00" stroke="#c8c8c8" stroke-width="1"/>
<line x1="1009.60" y1="1081.00" x2="1009.60" y2="1105.00" stroke="#c8c8c8" stroke-width="1"/>
<line x1="1103.40" y1="1081.00" x2="1103.40" y2="1105.00" stroke="#c8c8c8" stroke-width="1"/>
<line x1="1198.50" y1="1081.00" x2="1198.50" y2="1105.00" stroke="#c8c8c8" stroke-width="1"/>
<line x1="1442.50" y1="1081.00" x2="1442.50" y2="1105.00" stroke="#c8c8c8" stroke-width="1"/>
<path d="M1441.7 1073 Q1447.7 1073 1447.7 1079 V1101.2 Q1447.7 1107.2 1453.7 1107.2 H1637 Q1643 1107.2 1643 1101.2 V1079 Q1643 1073 1649 1073 Z" fill="#ffffff"/>
<text x="1458.60" y="1095.60" font-size="17.8" fill="#1a1a1a" textLength="174.80" lengthAdjust="spacingAndGlyphs" stroke="#1a1a1a" stroke-width="0.5" xml:space="preserve">Sales Summary Charts</text>
<rect x="1458.60" y="1102.50" width="174.80" height="2.20" fill="#107c41"/>
<line x1="1648.60" y1="1081.00" x2="1648.60" y2="1105.00" stroke="#c8c8c8" stroke-width="1"/>
<svg x="1660" y="1073" width="29" height="40" viewBox="1660 1073 29 40" overflow="hidden">
<text x="1665.00" y="1099.80" font-size="17" fill="#262626" xml:space="preserve">Chart</text>
</svg>
<circle cx="1703.2" cy="1091.8" r="1.9" fill="#262626"/>
<circle cx="1708.3" cy="1091.8" r="1.9" fill="#262626"/>
<circle cx="1713.4" cy="1091.8" r="1.9" fill="#262626"/>
<g stroke="#262626" stroke-width="1.6"><path d="M1741 1092 H1755.5 M1748.25 1084.5 V1099"/></g>
<rect x="1787.8" y="1086.9" width="2.6" height="2.6" fill="#262626"/>
<rect x="1787.8" y="1092.3" width="2.6" height="2.6" fill="#262626"/>
<rect x="1787.8" y="1097.7" width="2.6" height="2.6" fill="#262626"/>
<rect x="1809.3" y="1082.8" width="87.4" height="19.7" rx="9.8" fill="#f3f3f3"/>
<path d="M1813.5 1092.7 L1823.5 1087.6 L1823.5 1097.8 Z" fill="#707070" stroke="#707070" stroke-width="0.8" stroke-linejoin="round"/>
<rect x="1830" y="1087.3" width="40" height="10.5" rx="5.2" fill="#707070"/>
<path d="M1892.5 1092.7 L1882.5 1087.6 L1882.5 1097.8 Z" fill="#707070" stroke="#707070" stroke-width="0.8" stroke-linejoin="round"/>
<rect x="0.00" y="1113.50" width="1919.00" height="21.50" fill="#f3f3f3"/>
<text x="14.40" y="1131.50" font-size="12.8" fill="#262626" textLength="35.60" lengthAdjust="spacingAndGlyphs" xml:space="preserve">Ready</text>
<g fill="none" stroke="#262626" stroke-width="1.2"><path d="M76.1 1135 V1120.3 H92 V1124.8"/><path d="M76.1 1122.6 H92" stroke="#555" stroke-width="0.9"/><path d="M77.8 1125.2 H81.6 M77.8 1127.6 H80 M77.8 1130.4 H79.8" stroke="#555"/><circle cx="87.15" cy="1129.8" r="5"/></g>
<circle cx="87.15" cy="1129.8" r="2.1" fill="#262626"/>
<g fill="none" stroke="#1a1a1a" stroke-width="1.2" stroke-linecap="round" stroke-linejoin="round"><circle cx="122.6" cy="1120.6" r="2.1"/><path d="M116.2 1121.2 C116.6 1123.6 118.8 1124.6 120.6 1124.4 L124.6 1124.4 C126.6 1124.6 128.8 1123.6 129.2 1121.2"/><path d="M120.6 1124.4 C120.6 1128 120 1132 119.2 1135 M124.6 1124.4 C124.6 1126 124.4 1127 124.2 1128.2"/><path d="M121.6 1135 L123 1130.6"/><path d="M124.8 1127.6 L132.2 1135 M132.2 1127.6 L124.8 1135"/></g>
<text x="137.50" y="1131.50" font-size="12.8" fill="#1a1a1a" font-weight="bold" textLength="151.50" lengthAdjust="spacingAndGlyphs" xml:space="preserve">Accessibility: Investigate</text>
<rect x="1548.30" y="1113.50" width="49.40" height="21.50" fill="#dcdcdc"/>
<g fill="none" stroke="#303030" stroke-width="1.6"><rect x="1565" y="1119" width="15" height="14.6"/><path d="M1570 1119 V1133.6 M1575 1119 V1133.6 M1565 1123.9 H1580 M1565 1128.7 H1580" stroke-width="1.3"/><rect x="1615" y="1119" width="16" height="14.6"/><rect x="1618.8" y="1121.4" width="8.6" height="9.8" stroke-width="1.3"/><path d="M1620.5 1124.6 H1626 M1620.5 1127.6 H1626" stroke-width="1" stroke="#555"/><rect x="1665" y="1119" width="16" height="14.6"/><path d="M1665 1127.3 H1674.4 V1119 M1670.8 1119 V1127.3" stroke-width="1.3"/></g>
<line x1="1705.60" y1="1127.00" x2="1714.30" y2="1127.00" stroke="#333333" stroke-width="1.1"/>
<line x1="1722.00" y1="1127.50" x2="1845.40" y2="1127.50" stroke="#606060" stroke-width="1"/>
<rect x="1778.00" y="1119.00" width="5.50" height="15.00" fill="#5f5f5f"/>
<g stroke="#333333" stroke-width="1.1"><path d="M1851 1127 H1861.7 M1856.35 1121.7 V1132.3"/></g>
<text x="1877.70" y="1131.50" font-size="12.5" fill="#262626" textLength="24.70" lengthAdjust="spacingAndGlyphs" xml:space="preserve">96%</text>
</svg></body></html>
